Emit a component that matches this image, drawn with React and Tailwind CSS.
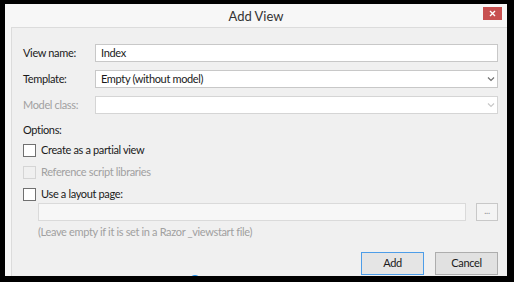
import React from 'react';

const Checkbox = ({ disabled }) => (
  <span
    className={`inline-block w-[13px] h-[13px] border ${
      disabled ? 'border-[#d5d5d5] bg-[#f0f0f0]' : 'border-[#707070] bg-white'
    }`}
  />
);

const Chevron = ({ disabled }) => (
  <svg width="8" height="6" viewBox="0 0 8 6" className="mr-[2px]">
    <path d="M1 1.5 L4 4.5 L7 1.5" fill="none" stroke={disabled ? '#c8c8c8' : '#707070'} strokeWidth="1.2" />
  </svg>
);

export default function App() {
  return (
    <div className="w-[514px] h-[282px] bg-black pt-[4px] pl-[5px] pr-[7px] pb-[6px]" style={{ fontFamily: 'Lato, "Noto Sans", sans-serif' }}>
      <div className="w-full h-full bg-[#f7f7f7] flex flex-col">
        <div className="h-[23px] relative flex items-center justify-center">
          <span className="text-[13px] text-[#333] mt-[2px]">Add View</span>
          <div className="absolute right-[5px] top-[3px] w-[19px] h-[13px] bg-[#c75050] flex items-center justify-center">
            <svg width="7" height="7" viewBox="0 0 7 7">
              <path d="M1 1 L6 6 M6 1 L1 6" stroke="#fff" strokeWidth="1.4" />
            </svg>
          </div>
        </div>
        <div className="flex-1 ml-[6px] border-l border-t border-[#dcdcdc] bg-[#f0f0f0] pl-[11px] pr-[9px] pt-[16px] text-[11px] tracking-[-0.35px] text-[#1a1a1a] relative overflow-hidden">
          <div className="flex items-center h-[18px]">
            <span className="w-[72px]">View name:</span>
            <div className="flex-1 h-[18px] bg-white border border-[#c8c8c8] px-[5px] flex items-center">Index</div>
          </div>
          <div className="flex items-center h-[18px] mt-[8px]">
            <span className="w-[72px]">Template:</span>
            <div className="flex-1 h-[18px] bg-white border border-[#c8c8c8] pl-[5px] flex items-center justify-between">
              <span>Empty (without model)</span>
              <Chevron />
            </div>
          </div>
          <div className="flex items-center h-[18px] mt-[8px]">
            <span className="w-[72px] text-[#a0a0a0]">Model class:</span>
            <div className="flex-1 h-[18px] bg-white border border-[#d5d5d5] flex items-center justify-end">
              <Chevron disabled />
            </div>
          </div>
          <div className="mt-[8px] h-[16px] flex items-center">Options:</div>
          <div className="mt-[4px] h-[16px] flex items-center gap-[5px]">
            <Checkbox />
            <span>Create as a partial view</span>
          </div>
          <div className="mt-[6px] h-[16px] flex items-center gap-[5px] text-[#a0a0a0]">
            <Checkbox disabled />
            <span>Reference script libraries</span>
          </div>
          <div className="mt-[6px] h-[16px] flex items-center gap-[5px]">
            <Checkbox />
            <span>Use a layout page:</span>
          </div>
          <div className="mt-[1px] ml-[15px] flex items-center gap-[10px]">
            <div className="flex-1 h-[18px] bg-[#f7f7f7] border border-[#dadada]" />
            <div className="w-[22px] h-[18px] bg-[#f4f4f4] border border-[#c8c8c8] flex items-center justify-center text-[9px] text-[#909090] leading-none pb-[3px]">...</div>
          </div>
          <div className="mt-[3px] ml-[15px] text-[#a0a0a0] h-[16px] flex items-center">(Leave empty if it is set in a Razor _viewstart file)</div>
          <div className="mt-[12px] flex justify-end gap-[11px]">
            <div className="w-[63px] h-[23px] bg-[#e5e5e5] border border-[#4d9de8] flex items-center justify-center">Add</div>
            <div className="w-[63px] h-[23px] bg-[#e1e1e1] border border-[#adadad] flex items-center justify-center">Cancel</div>
          </div>
          <div className="absolute left-[177px] top-[247px] w-[12px] h-[12px] rounded-full border-[3px] border-[#1f8ee8]" />
        </div>
      </div>
    </div>
  );
}
